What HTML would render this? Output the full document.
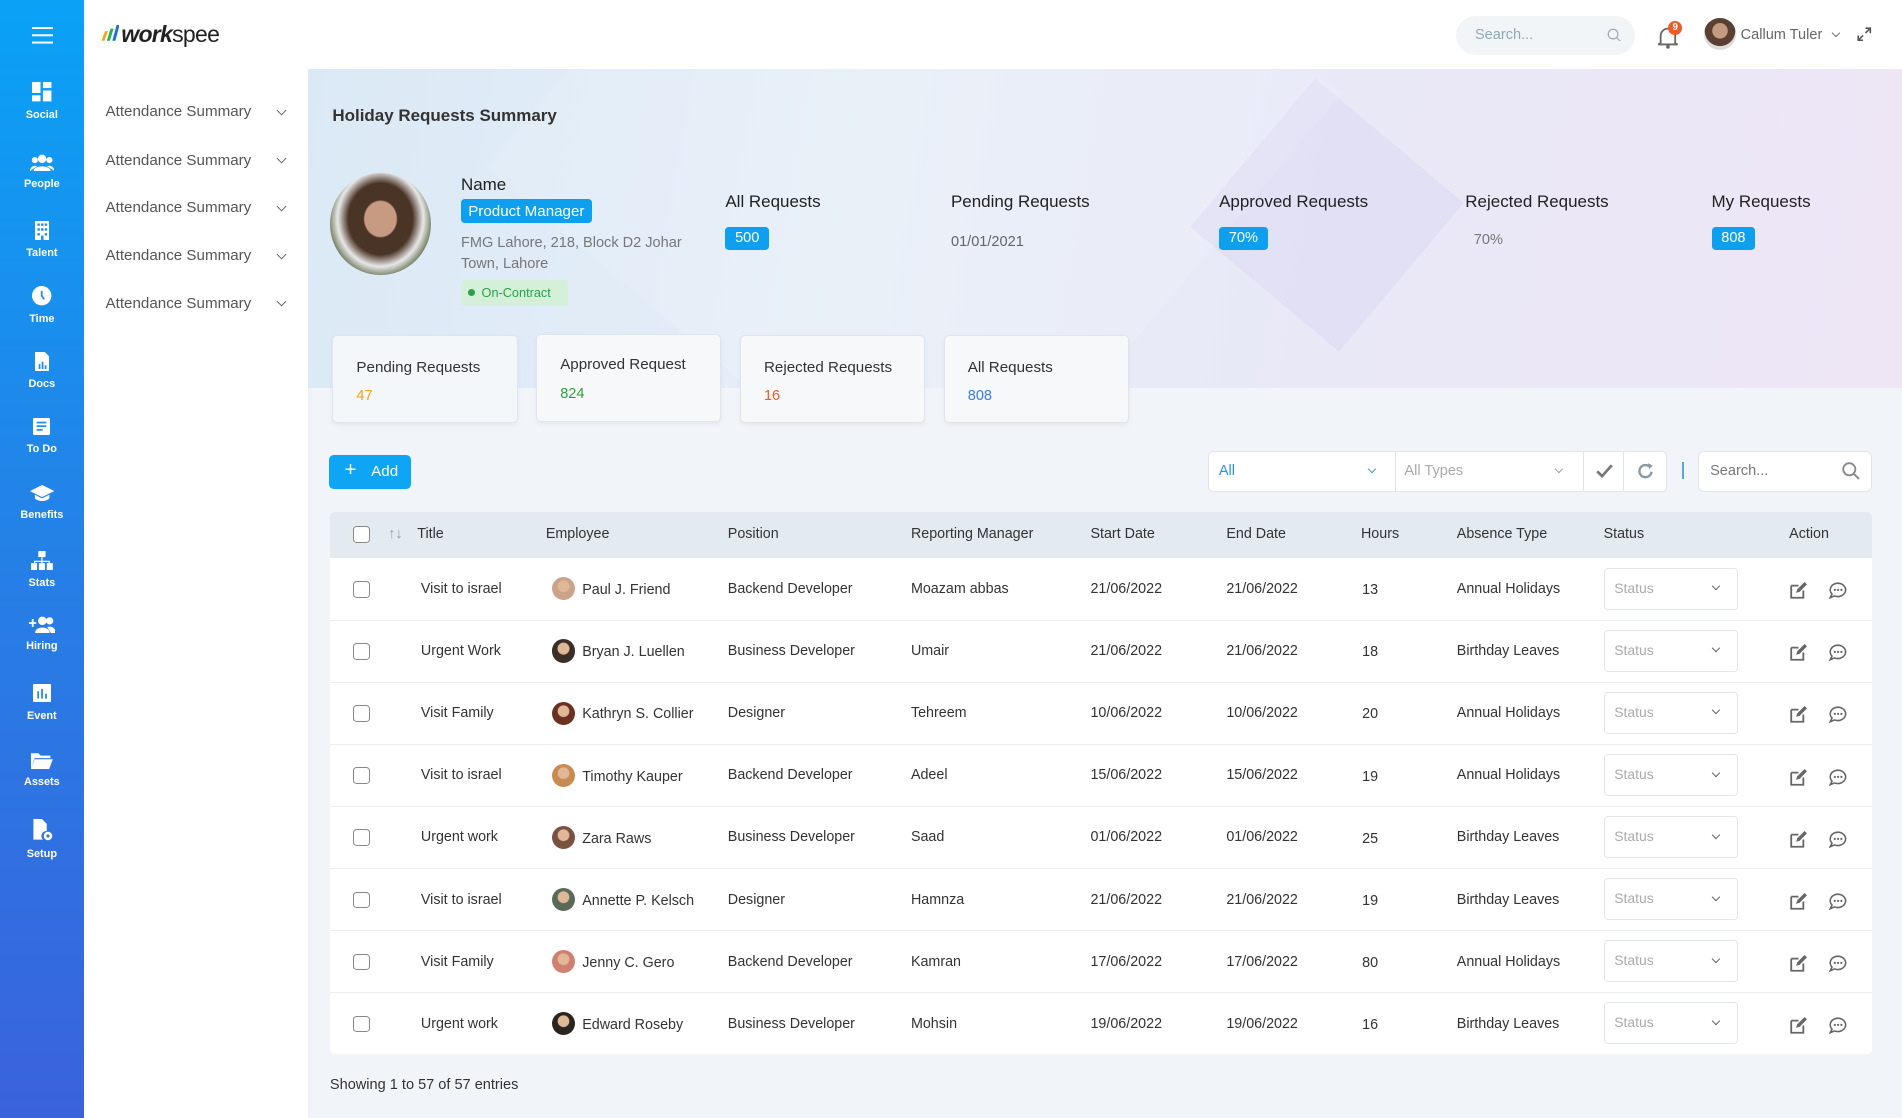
<!DOCTYPE html>
<html><head><meta charset="utf-8">
<style>
html,body{margin:0;padding:0;width:1902px;height:1118px;overflow:hidden;background:#f1f5f9}
#w{zoom:1.2130;width:1568px;height:922px;position:relative;font-family:"Liberation Sans",sans-serif;color:#333}
.a{position:absolute}
#sb{left:0;top:0;width:69px;height:922px;background:linear-gradient(180deg,#0aa2f6 0%,#2580e6 50%,#3a62dc 100%)}
.ni{position:absolute;left:0;width:69px;text-align:center;color:#fff;font-size:9px;font-weight:bold}
.ni svg{display:block;margin:0 auto 6px}
#top{left:69px;top:0;width:1499px;height:57px;background:#fff}
#sub{left:69px;top:57px;width:185px;height:865px;background:#fff}
.si{position:absolute;left:18px;font-size:12.5px;color:#555;width:150px}
.si:after{content:"";position:absolute;right:2px;top:3px;width:5px;height:5px;border-right:1.3px solid #666;border-bottom:1.3px solid #666;transform:rotate(45deg)}
#hero{left:254px;top:57px;width:1314px;height:263px;background:linear-gradient(100deg,#dbe9f6 0%,#e6eef8 35%,#e9e8f7 65%,#eee6f5 100%);overflow:hidden}
.h5{font-size:14px;font-weight:bold;color:#333}
.bd{background:#0ea0ef;color:#fff;border-radius:3px;font-size:12px;padding:3px 8px;display:inline-block}
.card{position:absolute;top:276px;width:151px;height:71px;background:#f4f7fa;border:1px solid #dfe5ec;border-radius:4px;box-shadow:0 2px 4px rgba(0,0,0,.05)}
.card .t{position:absolute;left:19px;top:19px;font-size:12.5px;color:#333}
.card .v{position:absolute;left:19px;top:43px;font-size:12px}
#tbl{left:272px;top:422px;width:1271px;height:447px;background:#fff;border-radius:4px;overflow:hidden}
.hd{position:absolute;left:0;top:0;width:1271px;height:38px;background:#e3eaf0}
.c{position:absolute;font-size:11.8px;color:#333;white-space:nowrap}
.row{position:absolute;left:0;width:1271px;height:51px;border-bottom:1px solid #eceff2}
.cb{position:absolute;left:19px;width:12px;height:12px;border:1px solid #888;border-radius:3px;background:#fff}
.st{position:absolute;left:1050px;top:8px;width:109px;height:33px;border:1px solid #e2e6ea;border-radius:3px;font-size:11.5px;color:#aaa}
.st span{position:absolute;left:8px;top:9px}
.st:after{content:"";position:absolute;right:15px;top:12px;width:4px;height:4px;border-right:1.3px solid #555;border-bottom:1.3px solid #555;transform:rotate(45deg)}
.av{position:absolute;left:183px;width:19px;height:19px;border-radius:50%}
</style></head><body><div id="w">
<div id="sb" class="a">
 <div class="a" style="left:26px;top:22px;width:18px;height:2px;background:#fff;box-shadow:0 6px 0 #fff,0 12px 0 #fff"></div>
 <div class="ni" style="top:68px"><svg width="16" height="16"><rect x="0" y="0" width="7" height="9" fill="#fff"/><rect x="9" y="0" width="7" height="5" fill="#fff"/><rect x="9" y="7" width="7" height="9" fill="#fff"/><rect x="0" y="11" width="7" height="5" fill="#fff"/></svg>Social</div>
 <div class="ni" style="top:127px"><svg width="20" height="14"><circle cx="10" cy="4" r="3.5" fill="#fff"/><circle cx="4" cy="5" r="2.5" fill="#fff"/><circle cx="16" cy="5" r="2.5" fill="#fff"/><path d="M3 14c0-5 14-5 14 0z M0 14c0-4 4-5 6-4 M20 14c0-4-4-5-6-4" fill="#fff"/></svg>People</div>
 <div class="ni" style="top:182px"><svg width="12" height="16"><rect width="12" height="16" fill="#fff"/><g fill="#2a8ceb"><rect x="2" y="2" width="2" height="2"/><rect x="5" y="2" width="2" height="2"/><rect x="8" y="2" width="2" height="2"/><rect x="2" y="6" width="2" height="2"/><rect x="5" y="6" width="2" height="2"/><rect x="8" y="6" width="2" height="2"/><rect x="2" y="10" width="2" height="2"/><rect x="8" y="10" width="2" height="2"/><rect x="5" y="12" width="2" height="4"/></g></svg>Talent</div>
 <div class="ni" style="top:236px"><svg width="16" height="16"><circle cx="8" cy="8" r="8" fill="#fff"/><path d="M8 4v4l2 3" stroke="#2a8ceb" stroke-width="1.5" fill="none"/></svg>Time</div>
 <div class="ni" style="top:290px"><svg width="12" height="16"><path d="M0 0h8l4 4v12H0z" fill="#fff"/><g fill="#2a8ceb"><rect x="3" y="10" width="1.5" height="4"/><rect x="5.5" y="8" width="1.5" height="6"/><rect x="8" y="11" width="1.5" height="3"/></g></svg>Docs</div>
 <div class="ni" style="top:345px"><svg width="14" height="14"><rect width="14" height="14" rx="1" fill="#fff"/><g fill="#2a8ceb"><rect x="3" y="3" width="8" height="1.5"/><rect x="3" y="6" width="8" height="1.5"/><rect x="3" y="9" width="5" height="1.5"/></g></svg>To Do</div>
 <div class="ni" style="top:400px"><svg width="20" height="14"><path d="M10 0L20 5 10 10 0 5z M4 8v3c3 3 9 3 12 0V8l-6 3z" fill="#fff"/></svg>Benefits</div>
 <div class="ni" style="top:454px"><svg width="18" height="16"><g fill="#fff"><rect x="6" y="0" width="6" height="5"/><rect x="0" y="10" width="5" height="6"/><rect x="6.5" y="10" width="5" height="6"/><rect x="13" y="10" width="5" height="6"/><path d="M8.5 5h1v3h6v2h-1V9h-5v1h-1V9h-5v1h-1V8h6z"/></g></svg>Stats</div>
 <div class="ni" style="top:508px"><svg width="22" height="14"><g fill="#fff"><path d="M0 5h6v1.5H0zM2.3 2.5h1.5v6.5H2.3z"/><circle cx="11" cy="4" r="3.5"/><circle cx="17" cy="4" r="3"/><path d="M5 14c0-6 12-6 12 0zM15 9c4-1 7 1 7 5h-4z"/></g></svg>Hiring</div>
 <div class="ni" style="top:564px"><svg width="15" height="15"><rect width="15" height="15" rx="1" fill="#fff"/><g fill="#2a8ceb"><rect x="3.5" y="6" width="1.5" height="6"/><rect x="6.7" y="4" width="1.5" height="8"/><rect x="10" y="8" width="1.5" height="4"/></g></svg>Event</div>
 <div class="ni" style="top:620px"><svg width="18" height="14"><path d="M0 1h6l2 2h8v2H3L0 14z M3 6h15l-3 8H0z" fill="#fff"/></svg>Assets</div>
 <div class="ni" style="top:675px"><svg width="18" height="18"><path d="M2 0h7l4 4v6a4 4 0 0 0-3 7H2z" fill="#fff"/><circle cx="14" cy="14" r="3.5" fill="#fff"/><circle cx="14" cy="14" r="1.3" fill="#2e74e3"/></svg>Setup</div>
</div>
<div id="top" class="a">
 <svg class="a" style="left:13px;top:21px" width="16" height="13"><path d="M2 13L5 5h2.5l-3 8z" fill="#f5a623"/><path d="M6.5 13L9.5 3H12L9 13z" fill="#22b14c"/><path d="M11 13L14.5 0H17L13.5 13z" fill="#1e6fd9"/></svg>
 <div class="a" style="left:31px;top:17px;font-size:19px;color:#222;letter-spacing:-0.6px"><i style="font-weight:bold">work</i><span>spee</span></div>
 <div class="a" style="left:1131px;top:13px;width:148px;height:32px;border-radius:16px;background:#f1f5f8"><span class="a" style="left:16px;top:9px;font-size:12px;color:#8fa9b8">Search...</span><svg class="a" style="left:125px;top:10px" width="11" height="11"><circle cx="5" cy="5" r="4" stroke="#9ab" fill="none"/><path d="M8 8l3 3" stroke="#9ab"/></svg></div>
 <svg class="a" style="left:1297px;top:21px" width="18" height="20"><path d="M3 15V9a6 6 0 0 1 12 0v6l2 1H1z" fill="none" stroke="#666" stroke-width="1.5"/><circle cx="9" cy="18" r="1.5" fill="#666"/></svg>
 <div class="a" style="left:1306px;top:17px;width:12px;height:12px;border-radius:6px;background:#f05a28;color:#fff;font-size:8px;text-align:center;line-height:12px;font-weight:bold">9</div>
 <div class="a" style="left:1336px;top:15px;width:26px;height:26px;border-radius:13px;background:radial-gradient(circle at 50% 40%,#c49a80 0 30%,#5a4032 32% 60%,#dcdcdc 62%)"></div>
 <div class="a" style="left:1366px;top:22px;font-size:12px;color:#666">Callum Tuler</div>
 <div class="a" style="left:1442px;top:25px;width:4px;height:4px;border-right:1px solid #666;border-bottom:1px solid #666;transform:rotate(45deg)"></div>
 <svg class="a" style="left:1462px;top:22px" width="12" height="12"><path d="M7 1h4v4M11 1L7 5M1 7v4h4M1 11l4-4" stroke="#555" fill="none" stroke-width="1.3"/></svg>
</div>
<div id="sub" class="a" style="box-shadow:2px 0 4px rgba(0,0,0,.02)">
 <div class="si" style="top:28px">Attendance Summary</div>
 <div class="si" style="top:68px">Attendance Summary</div>
 <div class="si" style="top:107px">Attendance Summary</div>
 <div class="si" style="top:147px">Attendance Summary</div>
 <div class="si" style="top:186px">Attendance Summary</div>
</div>
<div id="hero" class="a">
 <div class="a" style="left:760px;top:40px;width:160px;height:160px;background:rgba(200,195,240,.22);transform:rotate(40deg)"></div>
 <div class="a" style="left:250px;top:-200px;width:500px;height:500px;background:rgba(255,255,255,.12);transform:rotate(40deg)"></div>
</div>
<div class="a h5" style="left:274px;top:87px">Holiday Requests Summary</div>
<div class="a" style="left:272px;top:143px;width:83px;height:84px;border-radius:50%;background:radial-gradient(ellipse at 50% 45%,#c79a82 0 22%,#4a3426 24% 45%,#e8e8e8 60%,#5d6a48 75%)"></div>
<div class="a" style="left:380px;top:144px;font-size:14px;color:#222">Name</div>
<div class="a bd" style="left:380px;top:164px;font-size:12.5px;padding:3px 6px">Product Manager</div>
<div class="a" style="left:380px;top:192px;font-size:12px;color:#777;line-height:17px;width:190px">FMG Lahore, 218, Block D2 Johar Town, Lahore</div>
<div class="a" style="left:380px;top:231px;width:88px;height:21px;background:#d5f0d8;border-radius:3px;font-size:10.5px;color:#2e9e48"><span class="a" style="left:6px;top:7px;width:6px;height:6px;border-radius:3px;background:#2e9e48"></span><span class="a" style="left:17px;top:4px">On-Contract</span></div>
<div class="a h5" style="left:598px;top:158px;font-weight:normal;color:#222">All Requests</div>
<div class="a bd" style="left:598px;top:187px">500</div>
<div class="a h5" style="left:784px;top:158px;font-weight:normal;color:#222">Pending Requests</div>
<div class="a" style="left:784px;top:193px;font-size:12px;color:#666">01/01/2021</div>
<div class="a h5" style="left:1005px;top:158px;font-weight:normal;color:#222">Approved Requests</div>
<div class="a bd" style="left:1005px;top:187px">70%</div>
<div class="a h5" style="left:1208px;top:158px;font-weight:normal;color:#222">Rejected Requests</div>
<div class="a" style="left:1215px;top:191px;font-size:12px;color:#777">70%</div>
<div class="a h5" style="left:1411px;top:158px;font-weight:normal;color:#222">My Requests</div>
<div class="a bd" style="left:1411px;top:187px">808</div>
<div class="card" style="left:274px"><div class="t">Pending Requests</div><div class="v" style="color:#f0a318">47</div></div>
<div class="card" style="left:442px;top:275px;background:#f6f8fa"><div class="t" style="top:18px">Approved Request</div><div class="v" style="color:#2ea043;top:42px">824</div></div>
<div class="card" style="left:610px;background:#f6f8fa"><div class="t">Rejected Requests</div><div class="v" style="color:#f05a28">16</div></div>
<div class="card" style="left:778px;background:#f6f8fa"><div class="t">All Requests</div><div class="v" style="color:#3b7de0">808</div></div>
<div class="a" style="left:271px;top:375px;width:68px;height:28px;background:#0ea5f5;border-radius:4px;color:#fff;font-size:12.5px"><span class="a" style="left:13px;top:4px;font-size:17px;line-height:17px">+</span><span class="a" style="left:35px;top:7px">Add</span></div>
<div class="a" style="left:996px;top:372px;width:377px;height:32px;background:#fff;border:1px solid #e0e5ea;border-radius:4px">
 <span class="a" style="left:8px;top:9px;font-size:12px;color:#2e8ef0">All</span>
 <div class="a" style="left:132px;top:11px;width:4px;height:4px;border-right:1.3px solid #2e8ef0;border-bottom:1.3px solid #2e8ef0;transform:rotate(45deg)"></div>
 <div class="a" style="left:153px;top:0;width:1px;height:32px;background:#e0e5ea"></div>
 <span class="a" style="left:161px;top:9px;font-size:12px;color:#aaa">All Types</span>
 <div class="a" style="left:286px;top:11px;width:4px;height:4px;border-right:1px solid #999;border-bottom:1px solid #999;transform:rotate(45deg)"></div>
 <div class="a" style="left:308px;top:0;width:1px;height:32px;background:#e0e5ea"></div>
 <svg class="a" style="left:319px;top:10px" width="14" height="12"><path d="M1 6l4 4 8-9" stroke="#777" stroke-width="2.2" fill="none"/></svg>
 <div class="a" style="left:341px;top:0;width:1px;height:32px;background:#e0e5ea"></div>
 <svg class="a" style="left:353px;top:8px" width="14" height="15"><path d="M12 8a5 5 0 1 1-2-4.5" stroke="#8a9aa4" stroke-width="2" fill="none"/><path d="M9 1l4 2-3 3z" fill="#8a9aa4"/></svg>
</div>
<div class="a" style="left:1387px;top:381px;width:1px;height:14px;background:#5aa6d8"></div>
<div class="a" style="left:1400px;top:372px;width:142px;height:32px;background:#fff;border:1px solid #e0e5ea;border-radius:5px"><span class="a" style="left:9px;top:9px;font-size:12px;color:#777">Search...</span><svg class="a" style="left:118px;top:8px" width="15" height="15"><circle cx="6" cy="6" r="5" stroke="#888" stroke-width="1.5" fill="none"/><path d="M10 10l4 4" stroke="#888" stroke-width="1.6"/></svg></div>
<div id="tbl" class="a">
 <div class="hd">
  <div class="cb" style="top:12px"></div>
  <div class="c" style="left:48px;top:12px;color:#999">↑↓</div>
  <div class="c" style="left:72px;top:12px">Title</div>
  <div class="c" style="left:178px;top:12px">Employee</div>
  <div class="c" style="left:328px;top:12px">Position</div>
  <div class="c" style="left:479px;top:12px">Reporting Manager</div>
  <div class="c" style="left:627px;top:12px">Start Date</div>
  <div class="c" style="left:739px;top:12px">End Date</div>
  <div class="c" style="left:850px;top:12px">Hours</div>
  <div class="c" style="left:929px;top:12px">Absence Type</div>
  <div class="c" style="left:1050px;top:12px">Status</div>
  <div class="c" style="left:1203px;top:12px">Action</div>
 </div>
 <div id="rows"></div>
</div>
<div class="a" style="left:272px;top:888px;font-size:12px;color:#333">Showing 1 to 57 of 57 entries</div>
</div>
<script>
var d=[["Visit to israel","Paul J. Friend","Backend Developer","Moazam abbas","21/06/2022","21/06/2022","13","Annual Holidays","#c9a38a"],
["Urgent Work","Bryan J. Luellen","Business Developer","Umair","21/06/2022","21/06/2022","18","Birthday Leaves","#3a2e28"],
["Visit Family","Kathryn S. Collier","Designer","Tehreem","10/06/2022","10/06/2022","20","Annual Holidays","#6a3020"],
["Visit to israel","Timothy Kauper","Backend Developer","Adeel","15/06/2022","15/06/2022","19","Annual Holidays","#c88a50"],
["Urgent work","Zara Raws","Business Developer","Saad","01/06/2022","01/06/2022","25","Birthday Leaves","#7a5040"],
["Visit to israel","Annette P. Kelsch","Designer","Hamnza","21/06/2022","21/06/2022","19","Birthday Leaves","#5a6a58"],
["Visit Family","Jenny C. Gero","Backend Developer","Kamran","17/06/2022","17/06/2022","80","Annual Holidays","#d08070"],
["Urgent work","Edward Roseby","Business Developer","Mohsin","19/06/2022","19/06/2022","16","Birthday Leaves","#2a2420"]];
var h="";d.forEach(function(r,i){var t=38+i*51.2;h+='<div class="row" style="top:'+t+'px"><div class="cb" style="top:19px"></div><div class="c" style="left:75px;top:19px">'+r[0]+'</div><div class="av" style="top:16px;background:radial-gradient(circle at 50% 40%,#e0b898 0 30%,'+r[8]+' 35%)"></div><div class="c" style="left:208px;top:20px">'+r[1]+'</div><div class="c" style="left:328px;top:19px">'+r[2]+'</div><div class="c" style="left:479px;top:19px">'+r[3]+'</div><div class="c" style="left:627px;top:19px">'+r[4]+'</div><div class="c" style="left:739px;top:19px">'+r[5]+'</div><div class="c" style="left:851px;top:20px">'+r[6]+'</div><div class="c" style="left:929px;top:19px">'+r[7]+'</div><div class="st"><span>Status</span></div><svg class="a" style="left:1204px;top:20px" width="14" height="14"><path d="M1 3h6M1 3v10h10V7" stroke="#666" stroke-width="1.5" fill="none"/><path d="M5 9l1-3 6-6 2 2-6 6z" fill="#666"/></svg><svg class="a" style="left:1236px;top:20px" width="15" height="14"><path d="M7.5 1a6.5 5.5 0 1 1-3 10.5L1 13l1.5-3A6.5 5.5 0 0 1 7.5 1z" stroke="#666" stroke-width="1.3" fill="none"/><circle cx="4.8" cy="6.5" r="0.9" fill="#666"/><circle cx="7.5" cy="6.5" r="0.9" fill="#666"/><circle cx="10.2" cy="6.5" r="0.9" fill="#666"/></svg></div>'});
document.getElementById("rows").innerHTML=h;
</script>
</body></html>
